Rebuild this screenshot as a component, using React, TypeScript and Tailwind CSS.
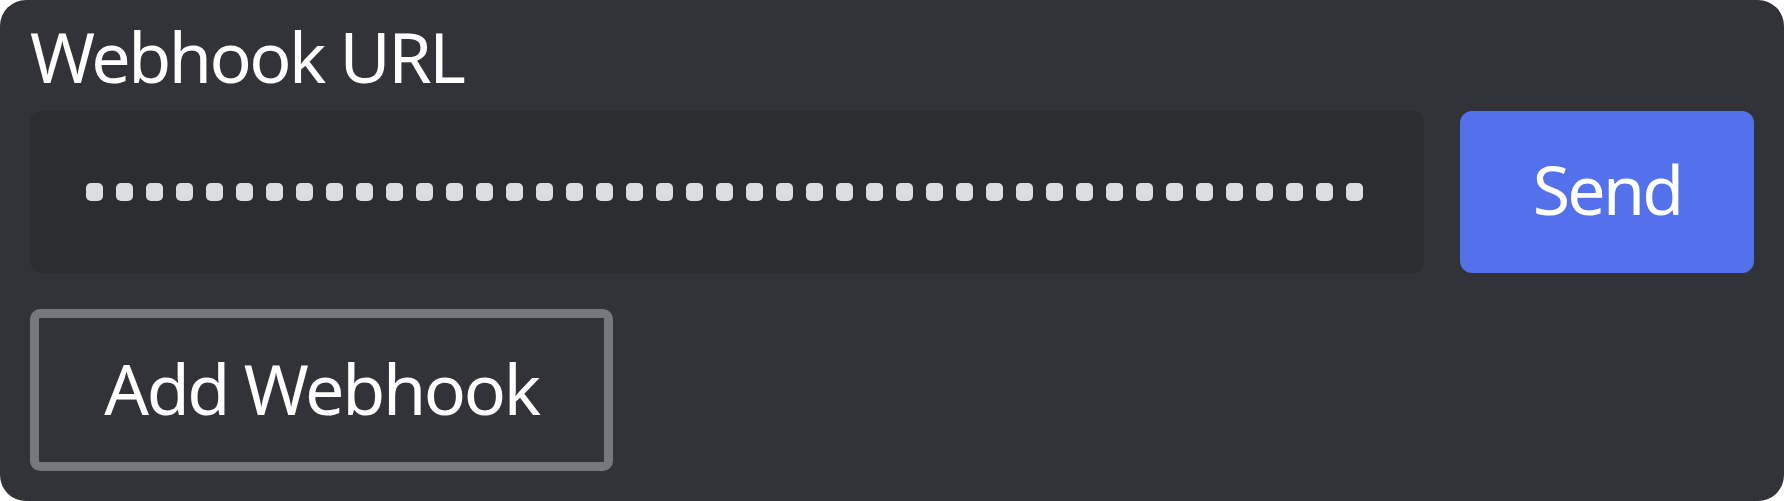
import React from "react";

// Masked webhook URL: one rounded block per hidden character
const MASK_LENGTH = 43;

function MaskedValue() {
  return (
    <div className="flex items-center gap-[13px]">
      {Array.from({ length: MASK_LENGTH }).map((_, i) => (
        <span key={i} className="block h-[18px] w-[17px] rounded-[5px] bg-[#dbdee1]" />
      ))}
    </div>
  );
}

export default function App() {
  return (
    <div className="w-full bg-white">
      <div
        className="flex flex-col rounded-[26px] bg-[#313338] px-[30px] pb-[30px] pt-[21px] text-white"
        style={{ fontFamily: '"Noto Sans", "Open Sans", sans-serif' }}
      >
        <h2 className="m-0 h-[70px] text-[70px] font-normal leading-[70px] tracking-[-0.036em] text-white">
          Webhook URL
        </h2>

        <div className="mt-[20px] flex h-[162px] items-stretch gap-[36px]">
          <div className="flex flex-1 items-center rounded-[12px] bg-[#2b2d31] pl-[56px]">
            <MaskedValue />
          </div>
          <button
            type="button"
            className="flex w-[294px] items-center justify-center rounded-[12px] bg-[#5371eb] pb-[6px] text-[68px] leading-[70px] tracking-[-0.04em] text-white"
          >
            Send
          </button>
        </div>

        <div className="mt-[36px] flex">
          <button
            type="button"
            className="flex h-[162px] w-[583px] items-center justify-center rounded-[10px] border-[9px] border-[#77787d] bg-transparent pb-[4px] text-[70px] leading-[70px] tracking-[-0.034em] text-white"
          >
            Add Webhook
          </button>
        </div>
      </div>
    </div>
  );
}
